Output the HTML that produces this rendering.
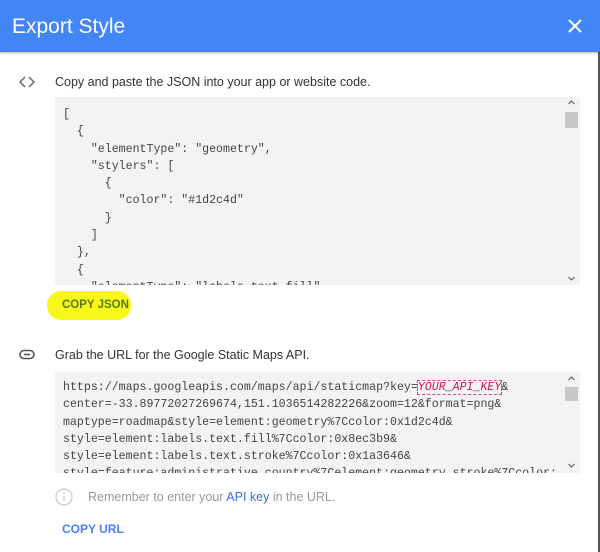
<!DOCTYPE html>
<html><head><style>
*{margin:0;padding:0;box-sizing:border-box}
body{width:600px;height:552px;background:#fff;font-family:"Liberation Sans",sans-serif;position:relative;overflow:hidden;border-right:2px solid #555}
.hdr{position:absolute;left:0;top:0;width:600px;height:52px;background:#4285f4;box-shadow:0 1px 2px rgba(0,0,0,.3)}
.hdr h1{position:absolute;left:12px;top:15px;font-weight:normal;font-size:21px;color:#fff}
.t{position:absolute;font-size:12.5px;color:#333;white-space:nowrap}
.box{position:absolute;left:55px;width:525px;background:#f3f3f3;overflow:hidden}
.box pre{font-family:"Liberation Mono",monospace;font-size:11.6px;color:#444;line-height:17.3px;position:absolute;left:8px}
.sb{position:absolute;right:2px;width:13px;top:0;bottom:0}
.thumb{position:absolute;left:0;width:13px;background:#c8c8c8}
.ar{position:absolute;left:3px}
.key{color:#c2185b;font-style:italic;outline:1px dashed #d05080}
</style></head><body>
<div class="hdr"><h1>Export Style</h1>
<svg style="position:absolute;left:568px;top:19px" width="14" height="14"><path d="M1 1L13 13M13 1L1 13" stroke="#fff" stroke-width="2"/></svg></div>

<svg style="position:absolute;left:19px;top:76px" width="16" height="12"><path d="M6 1L1 6L6 11M10 1L15 6L10 11" stroke="#666" stroke-width="1.5" fill="none"/></svg>
<div class="t" style="left:55px;top:75px">Copy and paste the JSON into your app or website code.</div>
<div class="box" style="top:97px;height:188px">
<pre style="top:9px">[
  {
    "elementType": "geometry",
    "stylers": [
      {
        "color": "#1d2c4d"
      }
    ]
  },
  {
    "elementType": "labels.text.fill",</pre>
<div class="sb"><svg class="ar" style="top:3px" width="7" height="5"><path d="M0.5 4L3.5 1L6.5 4" stroke="#555" fill="none"/></svg><div class="thumb" style="top:15px;height:16px"></div><svg class="ar" style="top:179px" width="7" height="5"><path d="M0.5 1L3.5 4L6.5 1" stroke="#555" fill="none"/></svg></div>
</div>
<div style="position:absolute;left:47px;top:291px;width:84px;height:29px;background:#f7f71a;border-radius:14px"></div>
<div class="t" style="left:62px;top:299px;font-size:11.5px;font-weight:bold;color:#5b7a12">COPY JSON</div>

<svg style="position:absolute;left:19px;top:349px" width="16" height="12"><rect x="1" y="1.5" width="14" height="8" rx="4" stroke="#555" stroke-width="1.6" fill="none"/><rect x="4" y="4" width="8" height="3" fill="#fff"/><path d="M5 5.5H11" stroke="#555" stroke-width="1.6"/></svg>
<div class="t" style="left:55px;top:348px">Grab the URL for the Google Static Maps API.</div>
<div class="box" style="top:372px;height:101px">
<pre style="top:7px">https://maps.googleapis.com/maps/api/staticmap?key=<span class="key">YOUR_API_KEY</span>&amp;
center=-33.89772027269674,151.1036514282226&amp;zoom=12&amp;format=png&amp;
maptype=roadmap&amp;style=element:geometry%7Ccolor:0x1d2c4d&amp;
style=element:labels.text.fill%7Ccolor:0x8ec3b9&amp;
style=element:labels.text.stroke%7Ccolor:0x1a3646&amp;
style=feature:administrative.country%7Celement:geometry.stroke%7Ccolor:</pre>
<div class="sb"><svg class="ar" style="top:4px" width="7" height="5"><path d="M0.5 4L3.5 1L6.5 4" stroke="#555" fill="none"/></svg><div class="thumb" style="top:15px;height:14px"></div><svg class="ar" style="top:91px" width="7" height="5"><path d="M0.5 1L3.5 4L6.5 1" stroke="#555" fill="none"/></svg></div>
</div>
<svg style="position:absolute;left:55px;top:488px" width="18" height="18"><circle cx="9" cy="9" r="8" stroke="#ccc" stroke-width="1.3" fill="none"/><path d="M9 8V13" stroke="#ccc" stroke-width="1.5"/><circle cx="9" cy="5.5" r="1" fill="#ccc"/></svg>
<div class="t" style="left:88px;top:490px;color:#999">Remember to enter your <span style="color:#3b6fd8">API key</span> in the URL.</div>
<div class="t" style="left:62px;top:522px;font-size:12px;font-weight:bold;color:#4a80f0">COPY URL</div>
</body></html>
